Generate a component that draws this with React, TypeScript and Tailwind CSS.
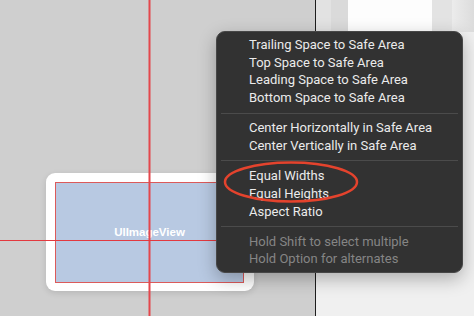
const groups: { label: string; disabled?: boolean }[][] = [
  [
    { label: 'Trailing Space to Safe Area' },
    { label: 'Top Space to Safe Area' },
    { label: 'Leading Space to Safe Area' },
    { label: 'Bottom Space to Safe Area' },
  ],
  [{ label: 'Center Horizontally in Safe Area' }, { label: 'Center Vertically in Safe Area' }],
  [{ label: 'Equal Widths' }, { label: 'Equal Heights' }, { label: 'Aspect Ratio' }],
  [
    { label: 'Hold Shift to select multiple', disabled: true },
    { label: 'Hold Option for alternates', disabled: true },
  ],
]

function ConstraintMenu() {
  return (
    <div className="absolute left-[216px] top-[31px] w-[247px] rounded-[9px] border border-[#474747] bg-[#323232] py-[4px] shadow-[0_6px_18px_rgba(0,0,0,0.28)]">
      {groups.map((items, gi) => (
        <div key={gi}>
          {gi > 0 && (
            <div className="flex h-[12.5px] items-center px-[4px]">
              <div className="h-px w-full bg-[#4b4b4b]" />
            </div>
          )}
          {items.map((it) => (
            <div
              key={it.label}
              className={`flex h-[17.7px] items-center pl-[32px] text-[13px] ${
                it.disabled ? 'text-[#858585]' : 'text-[#ebebeb]'
              }`}
            >
              {it.label}
            </div>
          ))}
        </div>
      ))}
    </div>
  )
}

export default function App() {
  return (
    <div className="relative flex h-[316px] w-[474px] overflow-hidden bg-[#cfcfcf] font-['Roboto','Liberation_Sans',sans-serif]">
      {/* canvas */}
      <div className="relative w-[315px] shrink-0 bg-[#cfcfcf]">
        <div className="absolute left-[46px] top-[173px] h-[118px] w-[208px] rounded-[9px] bg-white p-[9px] shadow-[0_2px_6px_rgba(0,0,0,0.12)]">
          <div className="flex h-[101px] w-[189px] items-center justify-center border border-[#dc5a5a] bg-[#b8c9e2]">
            <span className="font-['Liberation_Sans',sans-serif] text-[11.5px] font-bold text-white">UIImageView</span>
          </div>
        </div>
        {/* guides */}
        <svg className="pointer-events-none absolute left-0 top-0" width="315" height="316">
          <rect x="148.5" y="0" width="2" height="316" fill="#e4474c" />
          <line x1="0" y1="240.5" x2="315" y2="240.5" stroke="#e3393f" strokeWidth="1" />
        </svg>
      </div>
      <div className="w-px shrink-0 bg-[#1e1e1e]" />
      {/* inspector side */}
      <div className="flex flex-1 flex-col bg-[#efefef]">
        <div className="flex h-[32px]">
          <div className="w-[15px] bg-[#e2e2e2]" />
          <div className="w-[17px] bg-[#dadada]" />
          <div className="w-[84px] bg-[#fdfdfd]" />
          <div className="w-[20px] bg-[#e3e3e3]" />
          <div className="flex-1 bg-gradient-to-r from-[#ececec] to-[#dcdcdc]" />
        </div>
        <div className="flex-1 bg-[#f0f0f0]" />
      </div>

      <ConstraintMenu />

      <svg className="pointer-events-none absolute left-0 top-0" width="474" height="316">
        <ellipse cx="291" cy="182" rx="66" ry="19.5" fill="none" stroke="#e4432d" strokeWidth="2.5" />
      </svg>
    </div>
  )
}
